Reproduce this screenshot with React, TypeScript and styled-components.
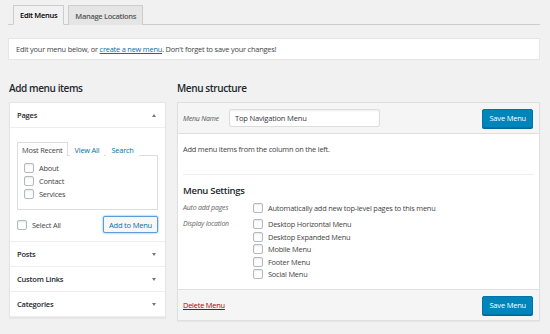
import { FC } from "react";
import styled, { createGlobalStyle } from "styled-components";

const GlobalStyle = createGlobalStyle`
  html, body {
    margin: 0;
    padding: 0;
    background: #f1f1f1;
  }
  body {
    font-family: "Open Sans", "Noto Sans", sans-serif;
    font-size: 7.4px;
    letter-spacing: -0.2px;
    color: #444;
  }
`;

const SPage = styled.div`
  width: 550px;
  height: 334px;
  padding: 5px 10px 0 8px;
  box-sizing: border-box;
  overflow: hidden;
`;

const STabBar = styled.div`
  display: flex;
  gap: 4px;
  padding-left: 5px;
  border-bottom: 1px solid #ccc;
  height: 19px;
`;

const STab = styled.div<{ $active?: boolean }>`
  display: flex;
  align-items: center;
  padding: 0 6px;
  box-sizing: border-box;
  border: 1px solid #ccc;
  border-bottom: ${(p) => (p.$active ? "1px solid #f1f1f1" : "none")};
  background: ${(p) => (p.$active ? "#f1f1f1" : "#e5e5e5")};
  color: ${(p) => (p.$active ? "#000" : "#555")};
  font-weight: 600;
  font-size: 7.5px;
  letter-spacing: -0.3px;
  margin-bottom: -1px;
  height: 20px;
`;

const SNotice = styled.div`
  margin-top: 13px;
  height: 22px;
  display: flex;
  align-items: center;
  padding-left: 7px;
  background: #fff;
  border: 1px solid #e5e5e5;
  box-sizing: border-box;
  color: #444;
`;

const SLink = styled.a`
  color: #0073aa;
  text-decoration: underline;
`;

const SColumns = styled.div`
  display: flex;
  gap: 11px;
  margin-top: 21px;
  padding-left: 1px;
`;

const SLeftCol = styled.div`
  width: 157px;
  flex-shrink: 0;
`;

const SRightCol = styled.div`
  flex: 1;
`;

const SHeading = styled.h2`
  margin: 0 0 7px;
  font-size: 10px;
  letter-spacing: -0.4px;
  font-weight: 600;
  color: #23282d;
  line-height: 14px;
`;

const SBox = styled.div`
  background: #fff;
  border: 1px solid #e5e5e5;
  box-shadow: 0 1px 1px rgba(0, 0, 0, 0.04);
`;

const SSectionHead = styled.div`
  display: flex;
  align-items: center;
  justify-content: space-between;
  height: 24px;
  padding: 0 9px 0 7px;
  border-bottom: 1px solid #eee;
  font-weight: 600;
  color: #23282d;
  font-size: 7.5px;
`;

const SArrow = styled.span<{ $up?: boolean }>`
  width: 0;
  height: 0;
  border-left: 2.5px solid transparent;
  border-right: 2.5px solid transparent;
  ${(p) =>
    p.$up ? "border-bottom: 3px solid #72777c;" : "border-top: 3px solid #72777c;"}
`;

const SSectionBody = styled.div`
  padding: 13px 7px 8px;
  border-bottom: 1px solid #eee;
`;

const SInnerTabs = styled.div`
  display: flex;
  align-items: flex-end;
  height: 14px;
`;

const SInnerTab = styled.div<{ $active?: boolean }>`
  display: flex;
  align-items: center;
  height: 14px;
  box-sizing: border-box;
  padding: 0 4px;
  margin-right: 2px;
  color: ${(p) => (p.$active ? "#444" : "#0073aa")};
  border: 1px solid ${(p) => (p.$active ? "#ddd" : "transparent")};
  border-bottom: none;
  background: #fff;
  margin-bottom: -1px;
  position: relative;
`;

const SInnerPanel = styled.div`
  border: 1px solid #ddd;
  height: 55px;
  box-sizing: border-box;
  padding: 8px 6px;
  display: flex;
  flex-direction: column;
  gap: 5px;
`;

const SCheckRow = styled.label`
  display: flex;
  align-items: center;
  gap: 5px;
  height: 8px;
  color: #444;
`;

const SCheck = styled.span`
  width: 8px;
  height: 8px;
  border: 1px solid #b4b9be;
  border-radius: 2px;
  box-shadow: inset 0 1px 2px rgba(0, 0, 0, 0.1);
  background: #fff;
  flex-shrink: 0;
`;

const SActions = styled.div`
  display: flex;
  align-items: center;
  justify-content: space-between;
  margin-top: 6px;
`;

const SButton = styled.button`
  height: 17px;
  padding: 0 5px;
  font-family: inherit;
  font-size: 7.5px;
  letter-spacing: -0.2px;
  color: #0073aa;
  background: #f7f7f7;
  border: 1px solid #5b9dd9;
  border-radius: 2px;
  box-shadow: 0 0 2px rgba(30, 140, 190, 0.8);
`;

const SPrimaryButton = styled.button`
  height: 19px;
  padding: 0 6px;
  font-family: inherit;
  font-size: 7.5px;
  letter-spacing: -0.2px;
  color: #fff;
  background: #0085ba;
  border: 1px solid #0073aa;
  border-radius: 2px;
  box-shadow: 0 1px 0 #006799;
`;

const SMenuBox = styled.div`
  background: #fff;
  border: 1px solid #dfdfdf;
  box-shadow: 0 1px 1px rgba(0, 0, 0, 0.04);
`;

const SMenuHead = styled.div`
  display: flex;
  align-items: center;
  height: 30px;
  padding: 0 6px 0 5px;
  background: #f5f5f5;
  border-bottom: 1px solid #dfdfdf;
`;

const SItalicLabel = styled.span`
  font-style: italic;
  color: #555;
  font-size: 7px;
`;

const SNameInput = styled.div`
  margin-left: 10px;
  width: 151px;
  height: 18px;
  box-sizing: border-box;
  border: 1px solid #ddd;
  border-radius: 2px;
  background: #fff;
  box-shadow: inset 0 1px 2px rgba(0, 0, 0, 0.07);
  display: flex;
  align-items: center;
  padding-left: 5px;
  color: #32373c;
  font-size: 7.6px;
`;

const SSpacer = styled.div`
  flex: 1;
`;

const SMenuBody = styled.div`
  padding: 0 5px 0 5px;
`;

const SHint = styled.p`
  margin: 0;
  padding: 9px 0 19px;
  border-bottom: 1px solid #eee;
  line-height: 12px;
`;

const SSubHeading = styled.h3`
  margin: 10px 0 7px;
  font-size: 9.5px;
  letter-spacing: -0.3px;
  font-weight: 600;
  color: #23282d;
  line-height: 12px;
`;

const SSettingRow = styled.div`
  display: flex;
  margin-bottom: 8px;
`;

const SSettingLabel = styled.div`
  width: 70px;
  font-style: italic;
  color: #666;
  font-size: 7px;
  line-height: 8px;
`;

const SSettingOptions = styled.div`
  display: flex;
  flex-direction: column;
  gap: 4.5px;
`;

const SMenuFoot = styled.div`
  display: flex;
  align-items: center;
  justify-content: space-between;
  height: 30px;
  padding: 0 6px 0 5px;
  margin-top: 11px;
  background: #f5f5f5;
  border-top: 1px solid #dfdfdf;
`;

const SDelete = styled.a`
  color: #a00;
  text-decoration: underline;
`;

const collapsed = ["Posts", "Custom Links", "Categories"];
const pages = ["About", "Contact", "Services"];
const locations = [
  "Desktop Horizontal Menu",
  "Desktop Expanded Menu",
  "Mobile Menu",
  "Footer Menu",
  "Social Menu",
];

const App: FC = () => {
  return (
    <>
      <GlobalStyle />
      <SPage>
        <STabBar>
          <STab $active>Edit Menus</STab>
          <STab>Manage Locations</STab>
        </STabBar>
        <SNotice>
          Edit your menu below, or&nbsp;<SLink>create a new menu</SLink>. Don't forget to save
          your changes!
        </SNotice>
        <SColumns>
          <SLeftCol>
            <SHeading>Add menu items</SHeading>
            <SBox>
              <SSectionHead>
                Pages <SArrow $up />
              </SSectionHead>
              <SSectionBody>
                <SInnerTabs>
                  <SInnerTab $active>Most Recent</SInnerTab>
                  <SInnerTab>View All</SInnerTab>
                  <SInnerTab>Search</SInnerTab>
                </SInnerTabs>
                <SInnerPanel>
                  {pages.map((page) => (
                    <SCheckRow key={page}>
                      <SCheck />
                      {page}
                    </SCheckRow>
                  ))}
                </SInnerPanel>
                <SActions>
                  <SCheckRow>
                    <SCheck />
                    Select All
                  </SCheckRow>
                  <SButton>Add to Menu</SButton>
                </SActions>
              </SSectionBody>
              {collapsed.map((name) => (
                <SSectionHead key={name}>
                  {name} <SArrow />
                </SSectionHead>
              ))}
            </SBox>
          </SLeftCol>
          <SRightCol>
            <SHeading>Menu structure</SHeading>
            <SMenuBox>
              <SMenuHead>
                <SItalicLabel>Menu Name</SItalicLabel>
                <SNameInput>Top Navigation Menu</SNameInput>
                <SSpacer />
                <SPrimaryButton>Save Menu</SPrimaryButton>
              </SMenuHead>
              <SMenuBody>
                <SHint>Add menu items from the column on the left.</SHint>
                <SSubHeading>Menu Settings</SSubHeading>
                <SSettingRow>
                  <SSettingLabel>Auto add pages</SSettingLabel>
                  <SCheckRow>
                    <SCheck />
                    Automatically add new top-level pages to this menu
                  </SCheckRow>
                </SSettingRow>
                <SSettingRow>
                  <SSettingLabel>Display location</SSettingLabel>
                  <SSettingOptions>
                    {locations.map((loc) => (
                      <SCheckRow key={loc}>
                        <SCheck />
                        {loc}
                      </SCheckRow>
                    ))}
                  </SSettingOptions>
                </SSettingRow>
              </SMenuBody>
              <SMenuFoot>
                <SDelete>Delete Menu</SDelete>
                <SPrimaryButton>Save Menu</SPrimaryButton>
              </SMenuFoot>
            </SMenuBox>
          </SRightCol>
        </SColumns>
      </SPage>
    </>
  );
};

export default App;
